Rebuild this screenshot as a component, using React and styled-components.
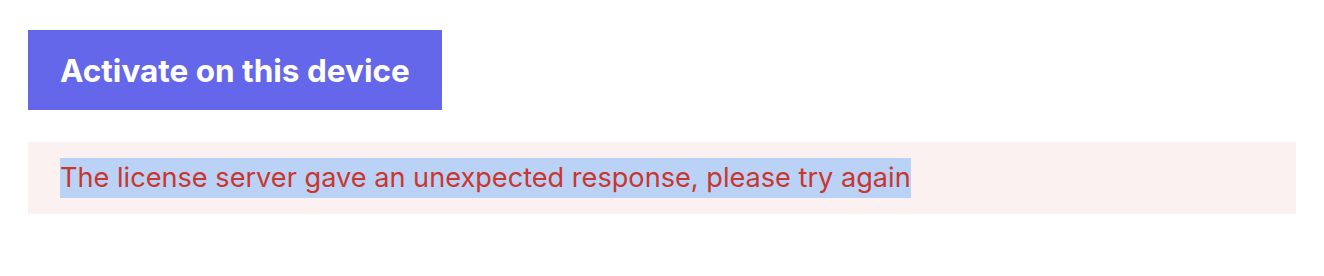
import React from "react";
import styled, { createGlobalStyle } from "styled-components";

const GlobalStyle = createGlobalStyle`
  body {
    margin: 0;
    background: #ffffff;
    font-family: Inter, "Noto Sans", sans-serif;
  }
`;

const Page = styled.div`
  display: flex;
  flex-direction: column;
  align-items: flex-start;
  gap: 32px;
  padding: 30px 28px;
`;

const Button = styled.button`
  height: 80px;
  padding: 0 32px;
  background: #6567ea;
  color: #ffffff;
  border: none;
  font-family: Inter, sans-serif;
  font-size: 31.5px;
  font-weight: 700;
  cursor: pointer;
`;

const ErrorBox = styled.div`
  align-self: stretch;
  background: #fbf1f1;
  padding: 16px 32px;
  color: #c9362f;
  font-size: 27.15px;
  line-height: 40px;
`;

const Selected = styled.span`
  display: inline-block;
  background: #bad2f5;
  line-height: 40px;
`;

const App = () => {
  return (
    <>
      <GlobalStyle />
      <Page>
        <Button>Activate on this device</Button>
        <ErrorBox>
          <Selected>
            The license server gave an unexpected response, please try again
          </Selected>
        </ErrorBox>
      </Page>
    </>
  );
};

export default App;
